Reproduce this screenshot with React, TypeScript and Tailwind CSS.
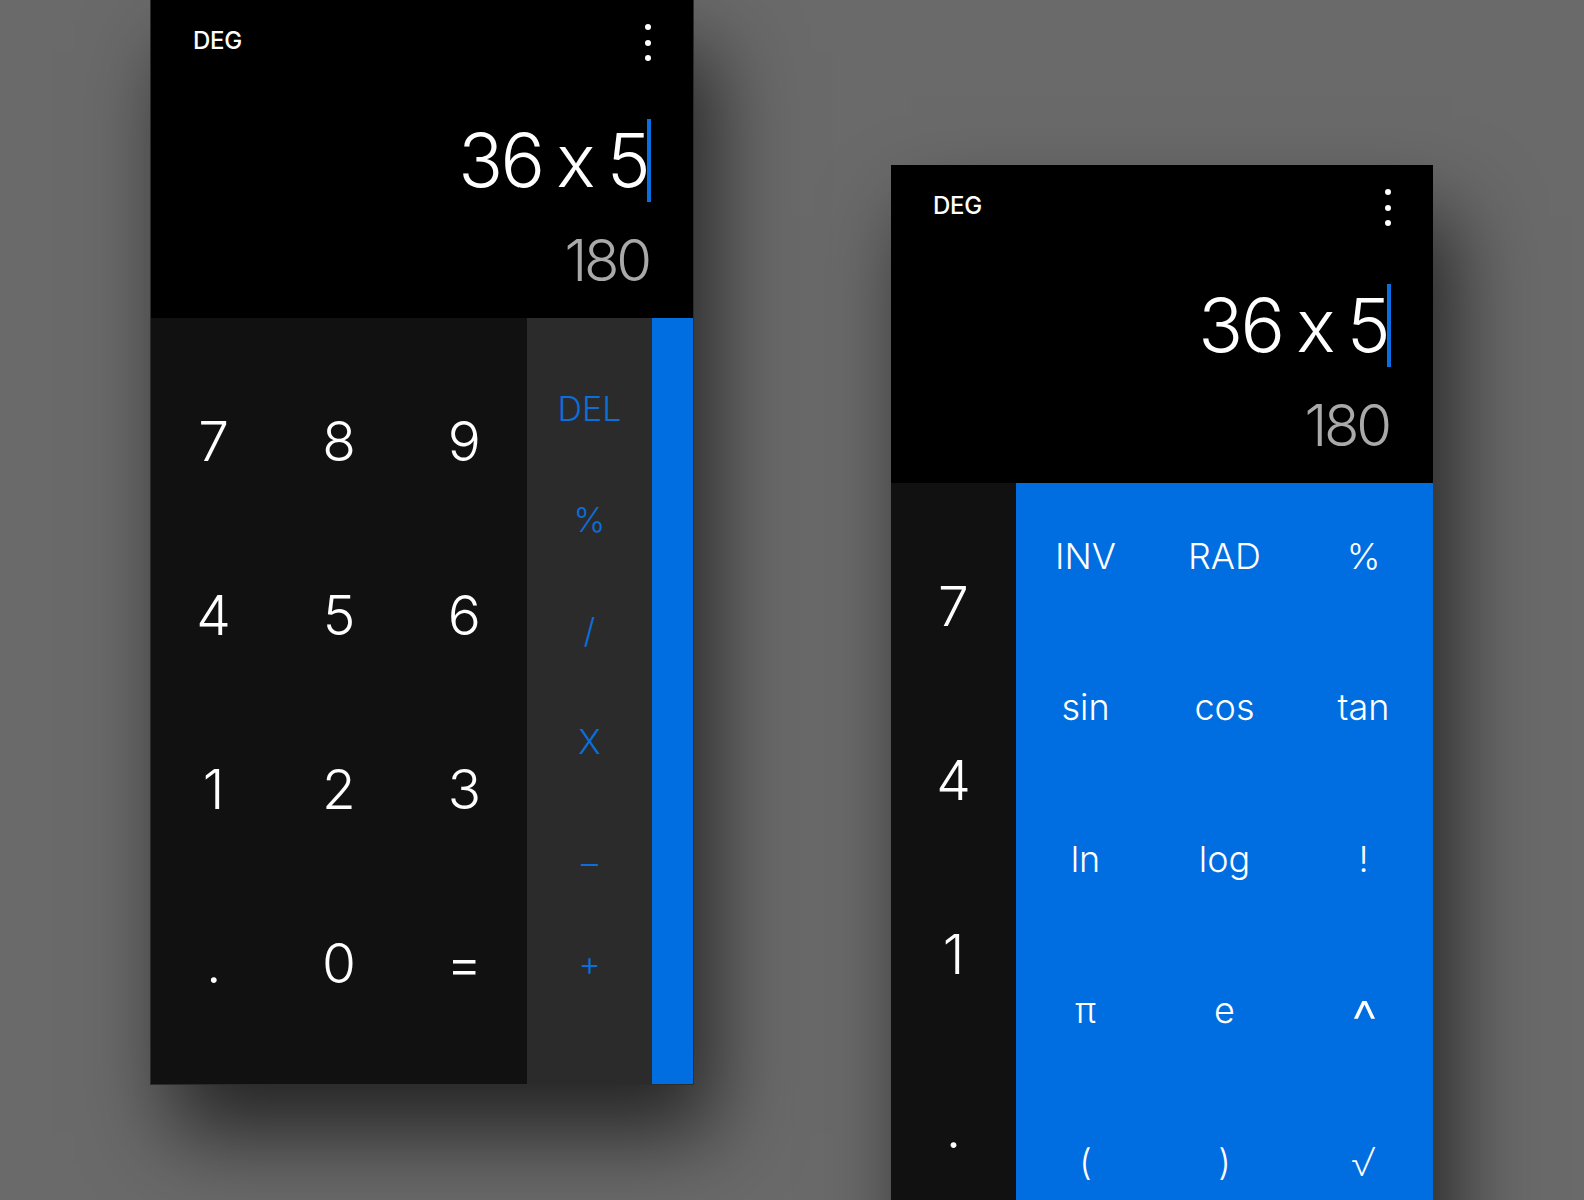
import React from "react";

const FONT = "font-['Inter','Roboto',sans-serif]";

function Dots() {
  return (
    <div className="flex flex-col gap-[9.5px] pt-[3px]">
      <span className="block w-[6px] h-[6px] rounded-full bg-white" />
      <span className="block w-[6px] h-[6px] rounded-full bg-white" />
      <span className="block w-[6px] h-[6px] rounded-full bg-white" />
    </div>
  );
}

function Header() {
  return (
    <div className="h-[318px] bg-black flex flex-col pl-[42px] pr-[42px]">
      <div className="flex justify-between items-start pt-[21px]">
        <span className="mt-[8px] text-[24px] leading-none font-medium text-white tracking-[-0.01em]">DEG</span>
        <Dots />
      </div>
      <div className="flex justify-end items-start mt-[58px]">
        <span className="mt-[4px] text-[74px] leading-none font-light text-white tracking-[-0.035em] [word-spacing:-0.06em] whitespace-pre">36 x 5</span>
        <span className="block w-[4px] h-[83px] bg-[#0a6de0] -ml-[1px]" />
      </div>
      <div className="mt-[29px] text-right text-[58px] leading-none font-light text-[#a9a9a9] tracking-[-0.055em] pr-[2px]">180</div>
    </div>
  );
}

const digits = ["7", "8", "9", "4", "5", "6", "1", "2", "3", ".", "0", "="];
const ops = ["DEL", "%", "/", "X", "–", "+"];
const sci = ["INV", "RAD", "%", "sin", "cos", "tan", "ln", "log", "!", "π", "e", "^", "(", ")", "√"];

function SciKey({ s }: { s: string }) {
  if (s === "^") {
    return <span className="text-[58px] font-light mt-[22px] -mr-[2px]">^</span>;
  }
  if (s === "√") {
    return <span className="text-[40px] font-extralight">√</span>;
  }
  return <span>{s}</span>;
}

function LeftPhone() {
  return (
    <div className="w-[542px] shrink-0 flex flex-col shadow-[20px_50px_80px_rgba(0,0,0,0.65)] outline outline-1 outline-[#2c2c2c]">
      <Header />
      <div className="flex h-[766px]">
        <div className="w-[376px] bg-[#111111] grid grid-cols-3 content-start pt-[37px]">
          {digits.map((d, i) => (
            <div key={i} className="h-[173.8px] flex items-center justify-center text-[55px] leading-none font-light text-white">
              {d}
            </div>
          ))}
        </div>
        <div className="w-[125px] bg-[#2b2b2b] flex flex-col pt-[35.5px]">
          {ops.map((o, i) => (
            <div key={i} className="h-[111px] flex items-center justify-center text-[34px] leading-none font-light text-[#0b6ed9]">
              <span className={o === "–" ? "mt-[22px]" : ""}>{o}</span>
            </div>
          ))}
        </div>
        <div className="flex-1 bg-[#006ee0]" />
      </div>
    </div>
  );
}

function RightPhone() {
  return (
    <div className="w-[542px] shrink-0 flex flex-col shadow-[20px_50px_80px_rgba(0,0,0,0.65)]">
      <Header />
      <div className="flex h-[766px]">
        <div className="w-[125px] bg-[#111111] flex flex-col pt-[37px]">
          {["7", "4", "1", "."].map((d, i) => (
            <div key={i} className="h-[173.8px] flex items-center justify-center text-[55px] leading-none font-light text-white">
              {d}
            </div>
          ))}
        </div>
        <div className="flex-1 bg-[#006ee0] grid grid-cols-3 content-start">
          {sci.map((s, i) => (
            <div key={i} className="h-[151.5px] pb-[6px] flex items-center justify-center text-[36px] leading-none font-light text-white">
              <SciKey s={s} />
            </div>
          ))}
        </div>
      </div>
    </div>
  );
}

export default function App() {
  return (
    <div className={`${FONT} w-[1584px] h-[1200px] overflow-hidden bg-[#6a6a6a] flex items-start pl-[151px] gap-[198px]`}>
      <LeftPhone />
      <div className="mt-[165px]">
        <RightPhone />
      </div>
    </div>
  );
}
